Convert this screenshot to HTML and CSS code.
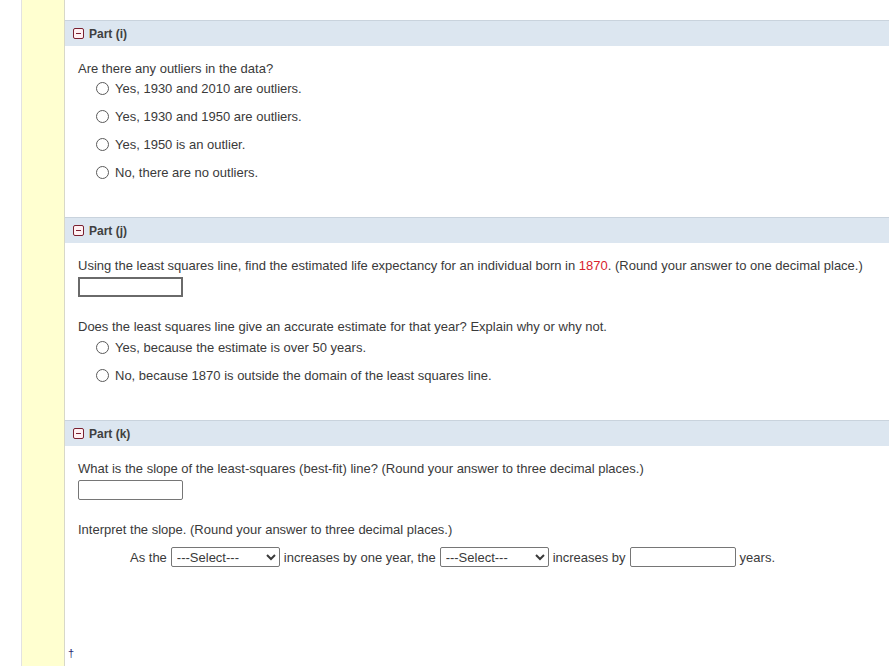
FILE: index.html
```html
<!DOCTYPE html>
<html>
<head>
<meta charset="utf-8">
<link rel="stylesheet" href="styles.css">
</head>
<body>
<div class="page">
  <div class="gutter"></div>
  <div class="rail"></div>
  <main class="main">
    <section class="part">
      <div class="part-head"><span class="toggle"></span><span class="part-title">Part (i)</span></div>
      <div class="part-body">
        <p class="q">Are there any outliers in the data?</p>
        <div class="options">
          <label class="opt"><input type="radio" name="pi"><span>Yes, 1930 and 2010 are outliers.</span></label>
          <label class="opt"><input type="radio" name="pi"><span>Yes, 1930 and 1950 are outliers.</span></label>
          <label class="opt"><input type="radio" name="pi"><span>Yes, 1950 is an outlier.</span></label>
          <label class="opt"><input type="radio" name="pi"><span>No, there are no outliers.</span></label>
        </div>
      </div>
    </section>

    <section class="part">
      <div class="part-head"><span class="toggle"></span><span class="part-title">Part (j)</span></div>
      <div class="part-body">
        <p class="q">Using the least squares line, find the estimated life expectancy for an individual born in <span class="red">1870</span>. (Round your answer to one decimal place.)</p>
        <input class="answer answer-active" type="text">
        <p class="q q-gap">Does the least squares line give an accurate estimate for that year? Explain why or why not.</p>
        <div class="options options-j">
          <label class="opt"><input type="radio" name="pj"><span>Yes, because the estimate is over 50 years.</span></label>
          <label class="opt"><input type="radio" name="pj"><span>No, because 1870 is outside the domain of the least squares line.</span></label>
        </div>
      </div>
    </section>

    <section class="part">
      <div class="part-head"><span class="toggle"></span><span class="part-title">Part (k)</span></div>
      <div class="part-body">
        <p class="q">What is the slope of the least-squares (best-fit) line? (Round your answer to three decimal places.)</p>
        <input class="answer" type="text">
        <p class="q q-gap">Interpret the slope. (Round your answer to three decimal places.)</p>
        <div class="sentence">
          <span>As the</span>
          <select class="sel"><option>---Select---</option></select>
          <span>increases by one year, the</span>
          <select class="sel"><option>---Select---</option></select>
          <span>increases by</span>
          <input class="answer answer-inline" type="text">
          <span>years.</span>
        </div>
      </div>
    </section>
    <div class="foot"><span class="dagger">†</span></div>
  </main>
</div>
</body>
</html>
```
FILE: styles.css
```css
html, body {
  margin: 0;
  padding: 0;
  height: 100%;
  background: #fff;
}
body {
  font-family: "Liberation Sans", Arial, sans-serif;
  font-size: 13px;
  color: #3a3a3a;
}
.page {
  display: flex;
  min-height: 666px;
}
.gutter {
  width: 21px;
  flex: none;
}
.rail {
  width: 42px;
  flex: none;
  background: #ffffd0;
  border-left: 1px solid #e2e2e2;
  border-right: 1px solid #d8d8c8;
}
.main {
  flex: 1;
  padding-top: 20px;
  display: flex;
  flex-direction: column;
}
.part-head {
  height: 25px;
  background: #dce6f0;
  border-top: 1px solid #c9d3dd;
  display: flex;
  align-items: center;
  padding-left: 8px;
  gap: 5px;
}
.toggle {
  width: 9px;
  height: 9px;
  border: 1px solid #7a2030;
  border-radius: 2px;
  position: relative;
  background: #fff0f2;
}
.toggle::after {
  content: "";
  position: absolute;
  left: 2px;
  right: 2px;
  top: 4px;
  height: 1px;
  background: #7a2030;
}
.part-title {
  font-weight: bold;
  color: #404040;
  font-size: 12px;
}
.part-body {
  padding: 15px 0 35px 13px;
  display: flex;
  flex-direction: column;
  align-items: flex-start;
}
.q {
  margin: 0;
  line-height: 16px;
}
.q-gap {
  margin-top: 22px;
}
.red {
  color: #d9232d;
}
.options {
  display: flex;
  flex-direction: column;
  gap: 8px;
  margin-top: 1px;
  padding-left: 18px;
}
.options-j {
  margin-top: 2px;
}
.opt {
  display: flex;
  align-items: center;
  height: 20px;
  gap: 6px;
}
.opt input {
  appearance: none;
  margin: 0;
  width: 13px;
  height: 13px;
  border: 1px solid #5a5a5a;
  border-radius: 50%;
  background: #fff;
  box-sizing: border-box;
}
.answer {
  box-sizing: border-box;
  width: 105px;
  height: 20px;
  margin: 3px 0 0;
  border: 1px solid #767676;
  border-radius: 2px;
  background: #fff;
  padding: 0 4px;
  font: inherit;
}
.answer-active {
  border: 2px solid #6a6a6a;
  border-radius: 0;
}
.sentence {
  margin-top: 9px;
  padding-left: 52px;
  display: flex;
  align-items: center;
  gap: 4px;
  height: 20px;
}
.sel {
  box-sizing: border-box;
  width: 109px;
  height: 20px;
  border: 1px solid #767676;
  border-radius: 2px;
  background: #fff;
  font-family: inherit;
  font-size: 13px;
  color: #3a3a3a;
  padding: 0 1px;
}
.answer-inline {
  margin: 0;
  width: 106px;
}
.foot {
  margin-top: auto;
  padding: 0 0 6px 3px;
}
.dagger {
  color: #2a2a70;
  font-size: 11px;
}
```
